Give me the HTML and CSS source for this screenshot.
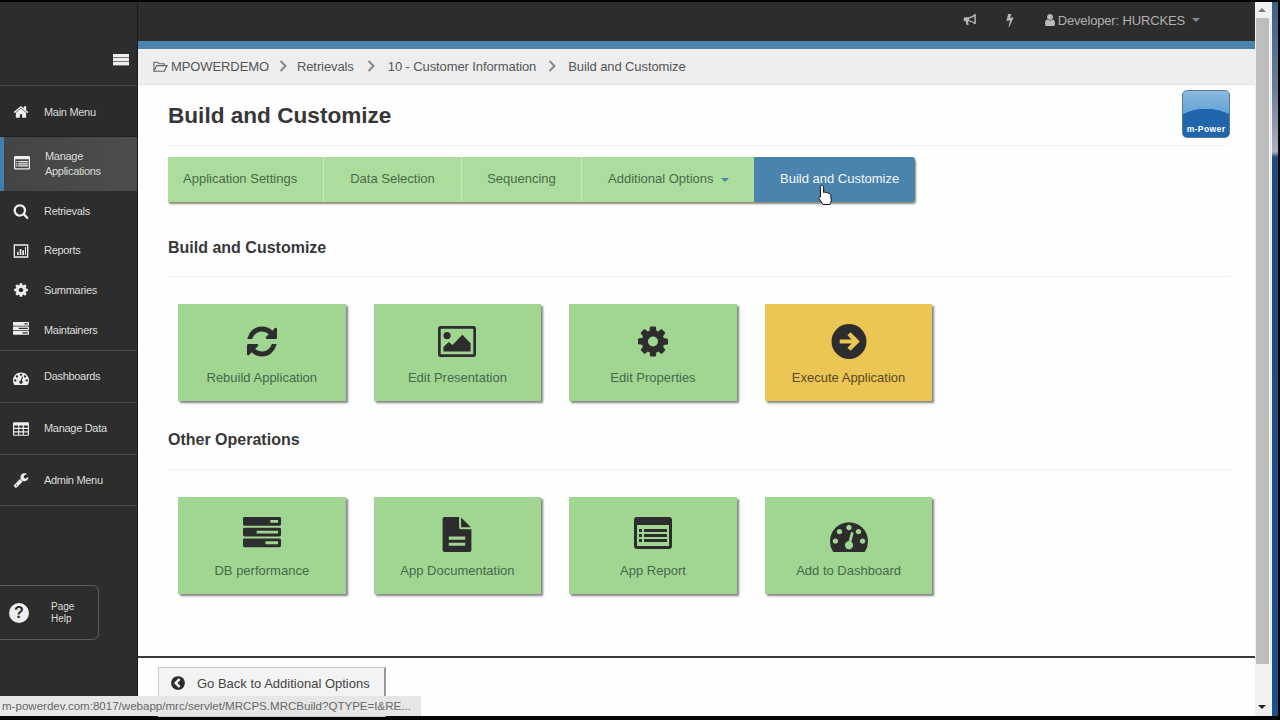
FILE: index.html
```html
<!DOCTYPE html>
<html lang="en">
<head>
<meta charset="utf-8">
<title>Build and Customize</title>
<link rel="stylesheet" href="styles.css">
</head>
<body>
<svg class="defs" width="0" height="0" aria-hidden="true">
  <symbol id="i-home" viewBox="0 0 1792 1792"><path d="M1472 992v480q0 26-19 45t-45 19h-384v-384h-256v384h-384q-26 0-45-19t-19-45v-480q0-1 .5-3t.5-3l575-474 575 474q1 2 1 6zm223-69l-62 74q-8 9-21 11h-3q-13 0-21-7l-692-577-692 577q-12 8-24 7-13-2-21-11l-62-74q-8-10-7-23.5t11-21.5l719-599q32-26 76-26t76 26l244 204v-195q0-14 9-23t23-9h192q14 0 23 9t9 23v408l219 182q10 8 11 21.5t-7 23.5z"/></symbol>
  <symbol id="i-search" viewBox="0 0 1792 1792"><path d="M1216 832q0-185-131.5-316.5t-316.5-131.5-316.5 131.5-131.5 316.5 131.5 316.5 316.5 131.5 316.5-131.5 131.5-316.5zm512 832q0 52-38 90t-90 38q-54 0-90-38l-343-342q-179 124-399 124-143 0-273.5-55.5t-225-150-150-225-55.5-273.5 55.5-273.5 150-225 225-150 273.5-55.5 273.5 55.5 225 150 150 225 55.5 273.5q0 220-124 399l343 343q37 37 37 90z"/></symbol>
  <symbol id="i-cog" viewBox="0 0 1792 1792"><path d="M1152 896q0-106-75-181t-181-75-181 75-75 181 75 181 181 75 181-75 75-181zm512-109v222q0 12-8 23t-20 13l-185 28q-19 54-39 91 35 50 107 138 10 12 10 25t-9 23q-27 37-99 108t-94 71q-12 0-26-9l-138-108q-44 23-91 38-16 136-29 186-7 28-36 28h-222q-14 0-24.5-8.5t-11.5-21.5l-28-184q-49-16-90-37l-141 107q-10 9-25 9-14 0-25-11-126-114-165-168-7-10-7-23 0-12 8-23 15-21 51-66.5t54-70.5q-27-50-41-99l-183-27q-13-2-21-12.5t-8-23.5v-222q0-12 8-23t19-13l186-28q14-46 39-92-40-57-107-138-10-12-10-24 0-10 9-23 26-36 98.5-107.5t94.5-71.5q13 0 26 10l138 107q44-23 91-38 16-136 29-186 7-28 36-28h222q14 0 24.5 8.5t11.5 21.5l28 184q49 16 90 37l142-107q9-9 24-9 13 0 25 10 129 119 165 170 7 8 7 22 0 12-8 23-15 21-51 66.5t-54 70.5q26 50 41 98l183 28q13 2 21 12.5t8 23.5z"/></symbol>
  <symbol id="i-wrench" viewBox="0 0 1792 1792"><path d="M448 1472q0-26-19-45t-45-19-45 19-19 45 19 45 45 19 45-19 19-45zm644-420l-682 682q-37 37-90 37-52 0-91-37l-106-108q-38-36-38-90 0-53 38-91l681-681q39 98 114.5 173.5t173.5 114.5zm634-435q0 39-23 106-47 134-164.5 217.5t-258.5 83.5q-185 0-316.5-131.5t-131.5-316.5 131.5-316.5 316.5-131.5q58 0 121.5 16.5t107.5 46.5q16 11 16 28t-16 28l-293 169v224l193 107q5-3 79-48.5t135.5-81 70.5-35.5q15 0 23.5 10t8.5 25z"/></symbol>
  <symbol id="i-refresh" viewBox="0 0 1792 1792"><path d="M1639 1056q0 5-1 7-64 268-268 434.5t-478 166.5q-146 0-282.5-55t-243.5-157l-129 129q-19 19-45 19t-45-19-19-45v-448q0-26 19-45t45-19h448q26 0 45 19t19 45-19 45l-137 137q71 66 161 102t187 36q134 0 250-65t186-179q11-17 53-117 8-23 30-23h192q13 0 22.5 9.5t9.5 22.5zm25-800v448q0 26-19 45t-45 19h-448q-26 0-45-19t-19-45 19-45l138-138q-148-137-349-137-134 0-250 65t-186 179q-11 17-53 117-8 23-30 23h-199q-13 0-22.5-9.5t-9.5-22.5v-7q65-268 270-434.5t480-166.5q146 0 284 55.5t245 156.5l130-129q19-19 45-19t45 19 19 45z"/></symbol>
  <symbol id="i-back" viewBox="0 0 1792 1792"><path d="M1037 1395l102-102q19-19 19-45t-19-45l-307-307 307-307q19-19 19-45t-19-45l-102-102q-19-19-45-19t-45 19l-454 454q-19 19-19 45t19 45l454 454q19 19 45 19t45-19zm627-499q0 209-103 385.5t-279.5 279.5-385.5 103-385.5-103-279.5-279.5-103-385.5 103-385.5 279.5-279.5 385.5-103 385.5 103 279.5 279.5 103 385.5z"/></symbol>
  <symbol id="i-bolt" viewBox="0 0 1792 1792"><path d="M1333 566q18 20 7 44l-540 1157q-13 25-42 25-4 0-14-2-17-5-25.5-19t-4.5-30l197-808-406 101q-4 1-12 1-18 0-31-11-18-15-13-39l201-825q4-14 16-23t28-9h328q19 0 32 12.5t13 29.5q0 8-5 18l-171 463 396-98q8-2 12-2 19 0 34 15z"/></symbol>
  <symbol id="i-user" viewBox="0 0 1792 1792"><path d="M1536 1399q0 109-62.5 187t-150.5 78h-854q-88 0-150.5-78t-62.5-187q0-85 8.5-160.5t31.5-152 58.5-131 94-89 134.5-34.5q131 128 313 128t313-128q76 0 134.5 34.5t94 89 58.5 131 31.5 152 8.5 160.5zm-256-887q0 159-112.5 271.5t-271.5 112.5-271.5-112.5-112.5-271.5 112.5-271.5 271.5-112.5 271.5 112.5 112.5 271.5z"/></symbol>
  <symbol id="i-bullhorn" viewBox="0 0 24 24"><path fill-rule="evenodd" d="M22 1.500v17l-2.200.7C16 15.800 11.500 14.500 8.500 14.300l1.200 6-3.300.9-1.800-6.900H3.500C2 14.300 1 12.800 1 10.800s1-3.500 2.500-3.500h5c3-.2 7.500-1.500 11.300-5zM19.500 5.500c-3 2.300-6.500 3.500-9 3.900v3c2.500.4 6 1.600 9 3.900z"/></symbol>
  <symbol id="i-picture" viewBox="0 0 42 34"><path fill-rule="evenodd" d="M3 0h36a3 3 0 0 1 3 3v28a3 3 0 0 1-3 3H3a3 3 0 0 1-3-3V3a3 3 0 0 1 3-3zM3 3v28h36V3zM10 6.500a4 4 0 1 1 0 8 4 4 0 0 1 0-8zM6 28v-5l6-5.500 4 3.500L27 9.500l9 9.500v9z"/></symbol>
  <symbol id="i-listalt" viewBox="0 0 38 32" preserveAspectRatio="xMidYMin meet"><path fill-rule="evenodd" d="M3 0h32a3 3 0 0 1 3 3v26a3 3 0 0 1-3 3H3a3 3 0 0 1-3-3V3a3 3 0 0 1 3-3zM3 8v21h32V8zM5 12h3v3H5zM5 17h3v3H5zM5 22h3v3H5zM10 12h23v3H10zM10 17h23v3H10zM10 22h23v3H10z"/></symbol>
  <symbol id="i-chart" viewBox="0 0 24 24"><path fill-rule="evenodd" d="M1 2h22v20H1zM3 4v16h18V4zM6 13h2.500v5H6zM10 9h2.500v9H10zM14 11h2.500v7H14zM18 6h1.500v12H18z"/></symbol>
  <symbol id="i-server" viewBox="0 0 39 31" preserveAspectRatio="xMidYMin meet"><path fill-rule="evenodd" d="M1.500 0h36a1.500 1.500 0 0 1 1.500 1.500v6a1.500 1.500 0 0 1-1.500 1.500h-36A1.500 1.500 0 0 1 0 7.500v-6A1.500 1.500 0 0 1 1.500 0zM28 3v3h8V3zM1.500 11h36a1.500 1.500 0 0 1 1.500 1.500v6a1.500 1.500 0 0 1-1.500 1.500h-36A1.500 1.500 0 0 1 0 18.500v-6A1.500 1.500 0 0 1 1.500 11zM14 14v3h22v-3zM1.500 22h36a1.500 1.500 0 0 1 1.500 1.500v6a1.500 1.500 0 0 1-1.500 1.500h-36A1.500 1.500 0 0 1 0 29.500v-6A1.500 1.500 0 0 1 1.500 22zM23 25v3h13v-3z"/></symbol>
  <symbol id="i-file" viewBox="0 0 28 34"><path fill-rule="evenodd" d="M2 0h14v10a2 2 0 0 0 2 2h10v20a2 2 0 0 1-2 2H2a2 2 0 0 1-2-2V2a2 2 0 0 1 2-2zM18 0.500L27.500 10H18zM6 19v3h16v-3zM6 25v3h16v-3z"/></symbol>
  <symbol id="i-grid" viewBox="0 0 28 24"><path fill-rule="evenodd" d="M2 0h24a2 2 0 0 1 2 2v20a2 2 0 0 1-2 2H2a2 2 0 0 1-2-2V2a2 2 0 0 1 2-2zM2 6v4h7V6zM11 6v4h6V6zM19 6v4h7V6zM2 12v4h7v-4zM11 12v4h6v-4zM19 12v4h7v-4zM2 18v4h7v-4zM11 18v4h6v-4zM19 18v4h7v-4z"/></symbol>
  <symbol id="i-dash" viewBox="0 256 1792 1408" preserveAspectRatio="xMidYMax meet"><path d="M384 1152q0-53-37.5-90.5t-90.5-37.5-90.5 37.5-37.5 90.5 37.5 90.5 90.5 37.5 90.5-37.5 37.5-90.5zm192-448q0-53-37.5-90.5t-90.5-37.5-90.5 37.5-37.5 90.5 37.5 90.5 90.5 37.5 90.5-37.5 37.5-90.5zm428 481l101-382q6-26-7.5-48.5t-38.5-29.5-48 6.500-30 39l-101 382q-60 5-107 43.5t-63 98.5q-20 77 20 146t117 89 146-20 89-117q16-60-6-117t-72-91zm660-33q0-53-37.5-90.5t-90.5-37.5-90.5 37.5-37.5 90.5 37.5 90.5 90.5 37.5 90.5-37.5 37.5-90.5zm-640-640q0-53-37.5-90.5t-90.5-37.5-90.5 37.5-37.5 90.5 37.5 90.5 90.5 37.5 90.5-37.5 37.5-90.5zm448 192q0-53-37.5-90.5t-90.5-37.5-90.5 37.5-37.5 90.5 37.5 90.5 90.5 37.5 90.5-37.5 37.5-90.5zm320 448q0 261-141 483-19 29-54 29h-1402q-35 0-54-29-141-221-141-483 0-182 71-348t191-286 286-191 348-71 348 71 286 191 191 286 71 348z"/></symbol>
</svg>

<div class="screen">
  <div class="app">
    <aside class="sidebar">
      <div class="side-top"><span class="burger"></span></div>
      <nav class="side-nav">
        <a class="nav main"><svg class="nav-ic"><use href="#i-home"/></svg><span>Main Menu</span></a>
        <a class="nav active"><svg class="nav-ic"><use href="#i-listalt"/></svg><span>Manage<br>Applications</span></a>
        <a class="nav short"><svg class="nav-ic"><use href="#i-search"/></svg><span>Retrievals</span></a>
        <a class="nav reports"><svg class="nav-ic"><use href="#i-chart"/></svg><span>Reports</span></a>
        <a class="nav short"><svg class="nav-ic"><use href="#i-cog"/></svg><span>Summaries</span></a>
        <a class="nav short ruled"><svg class="nav-ic"><use href="#i-server"/></svg><span>Maintainers</span></a>
        <a class="nav tall ruled"><svg class="nav-ic"><use href="#i-dash"/></svg><span>Dashboards</span></a>
        <a class="nav tall ruled"><svg class="nav-ic"><use href="#i-grid"/></svg><span>Manage Data</span></a>
        <a class="nav admin ruled"><svg class="nav-ic"><use href="#i-wrench"/></svg><span>Admin Menu</span></a>
      </nav>
      <a class="page-help"><span class="help-ic">?</span><span class="help-tx">Page<br>Help</span></a>
    </aside>

    <div class="right">
      <header class="topbar">
        <svg class="top-ic"><use href="#i-bullhorn"/></svg>
        <svg class="top-ic"><use href="#i-bolt"/></svg>
        <span class="user"><svg class="top-ic"><use href="#i-user"/></svg>Developer: HURCKES<i class="caret"></i></span>
      </header>
      <div class="accent"></div>
      <div class="crumbs">
        <svg class="folder" viewBox="0 0 16 13"><path d="M1 11.500V2h4l1.500 1.500H12V5.500M1 11.500l3-6h11l-3 6z" fill="none" stroke="#666" stroke-width="1.200"/></svg>
        <span>MPOWERDEMO</span><svg class="chev first" viewBox="0 0 8 12"><path d="M1.500 1l5 5-5 5" fill="none" stroke="#888" stroke-width="2"/></svg>
        <span>Retrievals</span><svg class="chev second" viewBox="0 0 8 12"><path d="M1.500 1l5 5-5 5" fill="none" stroke="#888" stroke-width="2"/></svg>
        <span>10 - Customer Information</span><svg class="chev" viewBox="0 0 8 12"><path d="M1.500 1l5 5-5 5" fill="none" stroke="#888" stroke-width="2"/></svg>
        <span>Build and Customize</span>
      </div>
      <main class="content">
        <div class="title-row">
          <h1>Build and Customize</h1>
          <div class="logo"><span>m-Power</span></div>
        </div>
        <div class="tabs">
          <a class="tab t1">Application Settings</a>
          <a class="tab t2">Data Selection</a>
          <a class="tab t3">Sequencing</a>
          <a class="tab t4">Additional Options<i class="tab-caret"></i></a>
          <a class="tab t5">Build and Customize</a>
        </div>
        <h2>Build and Customize</h2>
        <div class="cards">
          <a class="card"><svg class="card-ic"><use href="#i-refresh"/></svg>Rebuild Application</a>
          <a class="card"><svg class="card-ic"><use href="#i-picture"/></svg>Edit Presentation</a>
          <a class="card"><svg class="card-ic"><use href="#i-cog"/></svg>Edit Properties</a>
          <a class="card run"><svg class="card-ic" viewBox="0 0 34 34"><path fill-rule="evenodd" d="M17 0a17 17 0 1 1 0 34 17 17 0 0 1 0-34zM18.500 8l-3 3 4 4H8v4h11.500l-4 4 3 3 9-9z"/></svg>Execute Application</a>
        </div>
        <h2 class="second">Other Operations</h2>
        <div class="cards">
          <a class="card"><svg class="card-ic"><use href="#i-server"/></svg>DB performance</a>
          <a class="card"><svg class="card-ic"><use href="#i-file"/></svg>App Documentation</a>
          <a class="card"><svg class="card-ic"><use href="#i-listalt"/></svg>App Report</a>
          <a class="card"><svg class="card-ic"><use href="#i-dash"/></svg>Add to Dashboard</a>
        </div>
      </main>
      <footer class="foot">
        <a class="back"><svg class="back-ic"><use href="#i-back"/></svg>Go Back to Additional Options</a>
      </footer>
    </div>
  </div>
  <div class="scrollbar">
    <i class="arrow up"></i>
    <div class="thumb"></div>
    <i class="arrow down"></i>
  </div>
  <div class="edge"></div>
  <div class="status">m-powerdev.com:8017/webapp/mrc/servlet/MRCPS.MRCBuild?QTYPE=I&amp;RE...</div>
  <svg class="cursor" viewBox="0 0 17 22"><path d="M5 1.500c1 0 1.600.7 1.600 1.700v5.300c.8-.6 2-.4 2.400.3.800-.5 2-.2 2.300.6 1-.4 2.200.1 2.400 1.200l.6 5.400c0 1.800-.8 3-1.400 4.500H6l-4-6c-.8-1.400 1-2.600 2-1.400l-.6-.2V3.200C3.400 2.200 4 1.500 5 1.500z" fill="#fff" stroke="#111" stroke-width="1"/></svg>
</div>
</body>
</html>
```
FILE: styles.css
```css
* { box-sizing: border-box; }
html, body { margin: 0; padding: 0; height: 100%; overflow: hidden; }
body { font-family: "Liberation Sans", Arial, sans-serif; background: #000; color: #333; }
a { display: block; color: inherit; text-decoration: none; }
.defs { position: absolute; }

.screen { position: relative; display: flex; width: 1280px; height: 720px; padding: 2px 0 4px; background: #050505; overflow: hidden; }
.app { display: flex; width: 1255px; height: 100%; background: #2d2d2d; }

/* sidebar */
.sidebar { flex: 0 0 138px; display: flex; flex-direction: column; background: #2d2d2d; color: #ddd; border-right: 1px solid #1a1a1a; }
.side-top { height: 84px; display: flex; justify-content: flex-end; padding: 52px 8px 0 0; border-bottom: 1px solid #4a4a4a; }
.burger { width: 16px; height: 12px; background: repeating-linear-gradient(#eee 0 3px, #777 3px 4px); }
.side-nav { display: flex; flex-direction: column; }
.nav { display: flex; align-items: center; gap: 15px; padding-left: 13px; font-size: 11px; letter-spacing: -.3px; line-height: 15px; color: #ddd; font-weight: 400; }
.main { height: 51px; padding-top: 2px; border-bottom: 1px solid #1f1f1f; background: #2b2b2b; }
.short { height: 40px; }
.reports { height: 39px; }
.tall { height: 52px; }
.admin { height: 51px; }
.ruled { border-bottom: 1px solid #4a4a4a; }
.nav.short.ruled { height: 41px; }
.active { height: 54px; padding: 0 0 1px 10px; background: linear-gradient(90deg, #444, #4d4d4d); border-left: 4px solid #3f7fb0; }
.nav-ic { width: 16px; height: 16px; flex: none; fill: #eee; }
.page-help { display: flex; align-items: center; gap: 20px; width: 100px; height: 55px; margin: 79px 0 0 -1px; padding-left: 9px; border: 1px solid #5c5c5c; border-radius: 0 6px 6px 0; font-size: 10px; line-height: 12px; color: #ddd; }
.help-ic { display: flex; align-items: center; justify-content: center; width: 20px; height: 20px; border-radius: 50%; background: #eee; color: #2d2d2d; font-size: 16px; font-weight: 700; }
.help-tx { padding-left: 2px; }

/* right column */
.right { flex: 1; display: flex; flex-direction: column; min-width: 0; }
.topbar { height: 39px; display: flex; align-items: center; justify-content: flex-end; gap: 26px; padding: 0 55px 3px 0; background: #2d2d2d; color: #b0b0b0; font-size: 13px; letter-spacing: -.15px; }
.top-ic { width: 14px; height: 14px; fill: #b8b8b8; flex: none; }
.user { display: flex; align-items: center; gap: 1px; }
.caret { width: 0; height: 0; margin-left: 6px; border: 4px solid transparent; border-top-color: #888; border-bottom: 0; }
.accent { height: 8px; background: #4a84ad; }
.crumbs { height: 36px; display: flex; align-items: center; padding: 0 0 1px 15px; background: #eeeeee; border-bottom: 1px solid #e2e2e2; color: #555; font-size: 13px; letter-spacing: -.1px; }
.folder { width: 15px; height: 13px; margin-right: 3px; }
.chev { width: 8px; height: 12px; margin: 0 12px; }
.chev.first { margin: 0 10px; }
.chev.second { margin: 0 13px; }
.content { flex: 1; min-height: 0; padding: 0 24px 0 30px; background: #fefefe; }
.title-row { position: relative; height: 61px; padding-top: 16px; border-bottom: 1px solid #f5f5f5; }
h1 { margin: 0; font-size: 22.6px; line-height: 30px; font-weight: 700; color: #373737; }
.logo { position: absolute; right: 1px; top: 5px; width: 48px; height: 48px; display: flex; align-items: flex-end; justify-content: center; border: 1px solid #5a7a96; border-radius: 5px; background: radial-gradient(ellipse 85% 62% at 50% 100%, #1f66ad 0 98%, transparent 100%), linear-gradient(#8ab9dd, #3a8ccd); }
.logo span { font-size: 8.5px; font-weight: 700; letter-spacing: .4px; color: #fff; line-height: 11px; padding-bottom: 2px; white-space: nowrap; }

.tabs { display: flex; width: max-content; height: 45px; margin-top: 11px; box-shadow: 1px 2px 2px #8a8a7a; border-radius: 0 3px 3px 0; background: #acdd9d; }
.tab { display: flex; align-items: center; height: 100%; padding-bottom: 2px; background: #acdd9d; color: #4a6b4a; font-size: 13px; border-right: 1px solid #c7e8bc; }
.t1 { width: 156px; padding-left: 15px; }
.t2 { width: 138px; justify-content: center; }
.t3 { width: 120px; justify-content: center; }
.t4 { width: 172px; padding-left: 26px; border-right: 0; }
.t5 { width: 161px; padding-left: 26px; background: #4a84ad; color: #f2f6f9; border-right: 0; border-radius: 0 3px 3px 0; }
.tab-caret { width: 0; height: 0; margin-left: 7px; margin-top: 2px; border: 4px solid transparent; border-top-color: #4a84ad; border-bottom: 0; }

h2 { margin: 36px 0 0; height: 39px; font-size: 16px; line-height: 19px; font-weight: 700; color: #383838; border-bottom: 1px solid #f3f3f3; }
h2.second { margin-top: 29px; height: 40px; }
.cards { display: flex; gap: 28px; margin-top: 27px; padding-left: 10px; }
.card { display: flex; flex-direction: column; align-items: center; width: 167.6px; height: 97px; padding-top: 20px; background: #a1d692; color: #47684a; font-size: 13px; line-height: 15px; box-shadow: 2px 2px 2px #828282; text-align: center; }
.card-ic { display: block; width: 38px; height: 35px; margin-bottom: 11px; fill: #2d2d2d; }
.run { background: #ecc655; color: #5c4a1e; }

.foot { height: 60px; flex: none; padding: 9px 0 0 20px; background: #fefefe; border-top: 2px solid #3a3a3a; }
.back { display: flex; align-items: center; width: 228px; height: 50px; padding: 0 0 18px 11px; background: #f3f3f3; border: 1px solid #ccc; border-right: 2px solid #999; color: #444; font-size: 13px; }
.back-ic { width: 16px; height: 16px; margin-right: 11px; fill: #2d2d2d; flex: none; }

/* browser chrome */
.scrollbar { width: 17px; height: 100%; display: flex; flex-direction: column; align-items: flex-start; padding-left: 1px; background: #f1f1f1; }
.thumb { width: 13px; margin-top: 6px; height: 646px; background: #bdbdbd; }
.arrow { width: 0; height: 0; margin-left: 2px; border: 4px solid transparent; }
.up { margin-top: 6px; border-top: 0; border-bottom-color: #777; }
.down { margin-top: 41px; border-bottom: 0; border-top-color: #222; }
.edge { flex: 1; border-right: 2px solid #050505; background: linear-gradient(#3f5f88 0, #6f7f9a 90px, #b0b0c0 150px, #1f4a80 155px, #1f4f8c); }
.status { position: absolute; left: 0; top: 696px; width: 421px; height: 20px; padding-left: 2px; background: #e6e6e6; color: #666; font-size: 11.55px; line-height: 20px; white-space: nowrap; overflow: hidden; }
.cursor { position: absolute; left: 817px; top: 184px; width: 17px; height: 22px; }
```
